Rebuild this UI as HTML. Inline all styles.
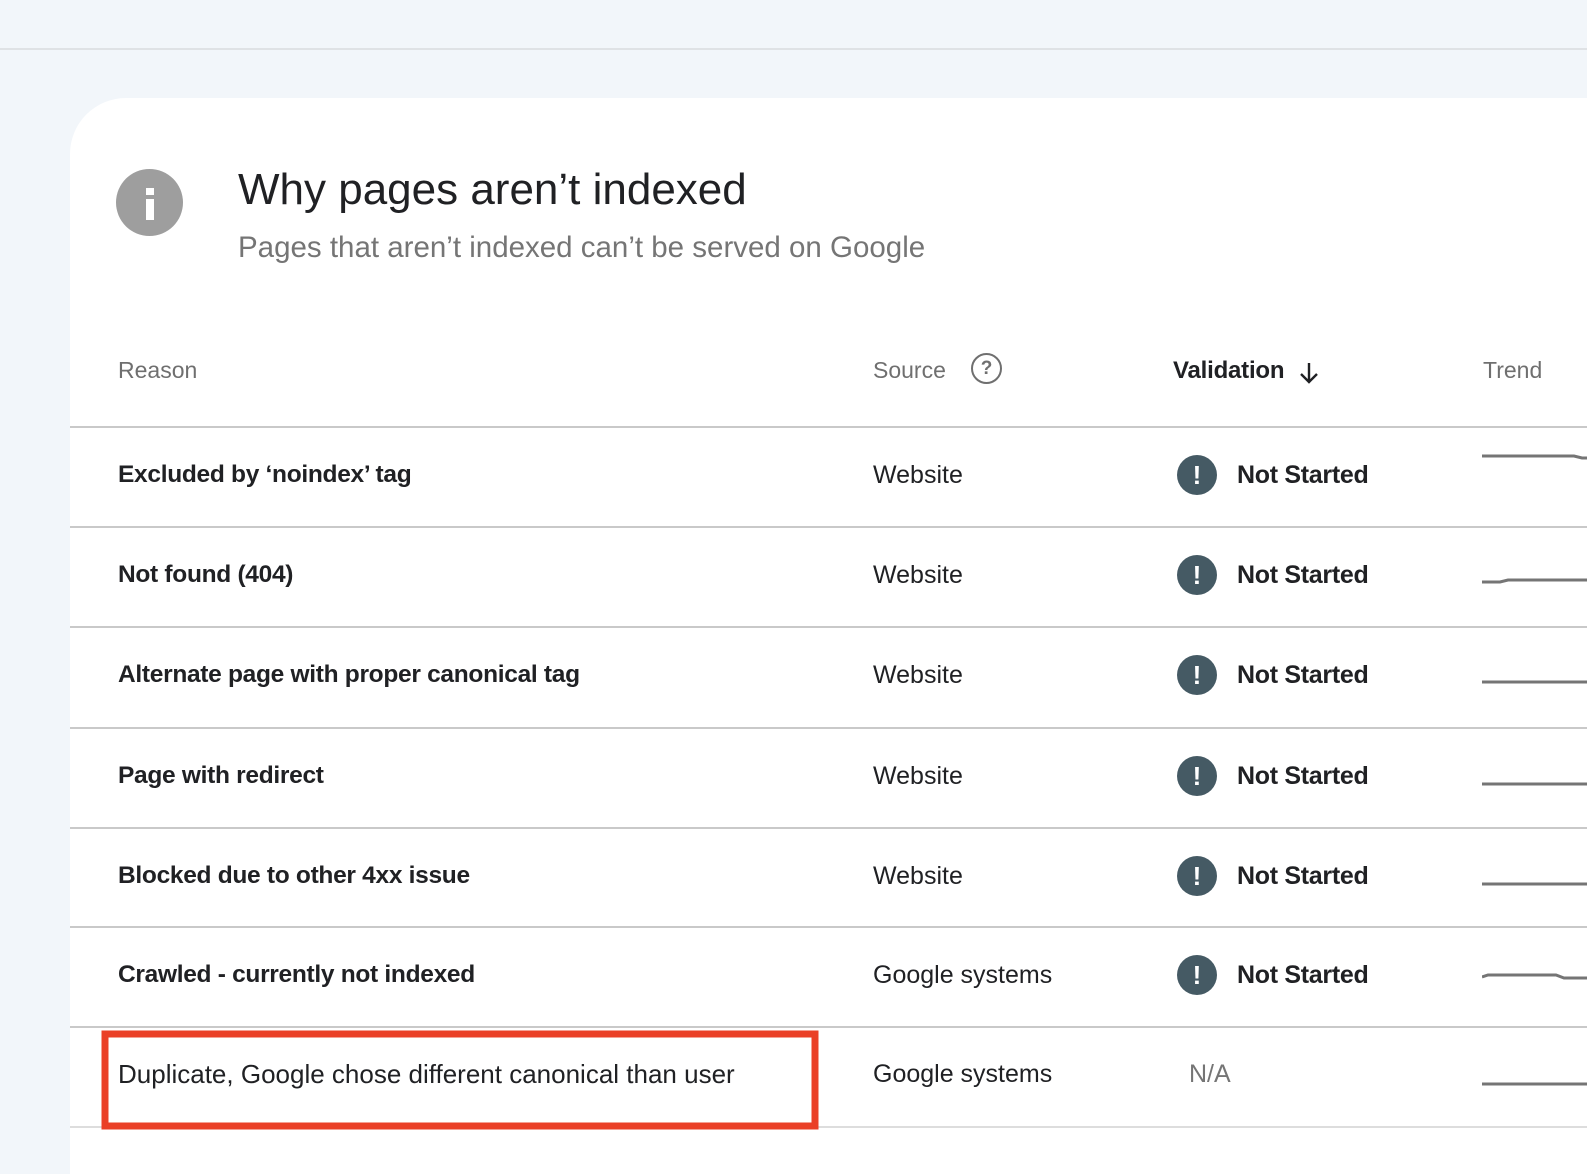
<!DOCTYPE html>
<html><head><style>
html,body{margin:0;width:1587px;height:1174px;overflow:hidden}
body{background:#f2f6fa;font-family:"Liberation Sans",sans-serif;position:relative;color:#202124}
.topline{position:absolute;left:0;right:0;top:48px;height:2px;background:#dfe2e5}
.card{position:absolute;left:70px;top:98px;width:1600px;height:1076px;background:#fff;border-top-left-radius:56px}
.abs{position:absolute;white-space:nowrap}
.line{position:absolute;left:70px;width:1600px;height:2px;background:#c9c9c9}
.row{position:absolute;left:0;width:1587px;height:98px}
.row>div{position:absolute;top:0;height:98px;display:flex;align-items:center;white-space:nowrap}
.r{left:118px;font-size:24.5px;font-weight:bold;letter-spacing:-0.3px}
.s{left:873px;font-size:25px}
.ex{left:1177px;}
.ex span{width:40px;height:40px;border-radius:50%;background:#455a64;color:#fff;font-weight:bold;font-size:26px;text-align:center;line-height:40px;display:block}
.ns{left:1237px;font-size:25px;font-weight:bold;letter-spacing:-0.3px}
</style></head><body>
<div class="topline"></div>
<div class="card"></div>
<div class="abs" style="left:116px;top:169px;width:67px;height:67px;border-radius:50%;background:#9e9e9e"></div>
<div class="abs" style="left:146px;top:188px;width:8px;height:7px;background:#fff"></div>
<div class="abs" style="left:146px;top:199px;width:8px;height:21px;background:#fff"></div>
<div class="abs" style="left:238px;top:165px;font-size:44px;color:#202124">Why pages aren’t indexed</div>
<div class="abs" style="left:238px;top:231px;font-size:29.5px;color:#757575">Pages that aren’t indexed can’t be served on Google</div>
<div class="abs" style="left:118px;top:357px;font-size:23px;color:#6f6f6f">Reason</div>
<div class="abs" style="left:873px;top:357px;font-size:23px;color:#6f6f6f">Source</div>
<div class="abs" style="left:971px;top:353px;width:27px;height:27px;border:2.5px solid #6f6f6f;border-radius:50%;text-align:center;line-height:27px;font-size:19px;font-weight:bold;color:#6f6f6f">?</div>
<div class="abs" style="left:1173px;top:357px;font-size:24px;color:#202124;font-weight:bold;letter-spacing:-0.2px">Validation</div>
<svg class="abs" style="left:1296px;top:360px" width="26" height="26"><path d="M13 3v19M5 14l8 8 8-8" stroke="#202124" stroke-width="2.4" fill="none"/></svg>
<div class="abs" style="left:1483px;top:357px;font-size:23px;color:#6f6f6f">Trend</div>
<div class="line" style="top:426px"></div>
<div class="line" style="top:526px"></div>
<div class="line" style="top:626px"></div>
<div class="line" style="top:727px"></div>
<div class="line" style="top:827px"></div>
<div class="line" style="top:926px"></div>
<div class="line" style="top:1026px"></div>
<div class="line" style="top:1126px;background:#ddd"></div>

<div class="row" style="top:426px"><div class="r">Excluded by ‘noindex’ tag</div><div class="s">Website</div><div class="ex"><span>!</span></div><div class="ns">Not Started</div></div>
<div class="row" style="top:526px"><div class="r">Not found (404)</div><div class="s">Website</div><div class="ex"><span>!</span></div><div class="ns">Not Started</div></div>
<div class="row" style="top:626px"><div class="r">Alternate page with proper canonical tag</div><div class="s">Website</div><div class="ex"><span>!</span></div><div class="ns">Not Started</div></div>
<div class="row" style="top:727px"><div class="r">Page with redirect</div><div class="s">Website</div><div class="ex"><span>!</span></div><div class="ns">Not Started</div></div>
<div class="row" style="top:827px"><div class="r">Blocked due to other 4xx issue</div><div class="s">Website</div><div class="ex"><span>!</span></div><div class="ns">Not Started</div></div>
<div class="row" style="top:926px"><div class="r">Crawled - currently not indexed</div><div class="s">Google systems</div><div class="ex"><span>!</span></div><div class="ns">Not Started</div></div>
<div class="row" style="top:1025px"><div class="r" style="font-weight:normal;letter-spacing:0;font-size:26px">Duplicate, Google chose different canonical than user</div><div class="s">Google systems</div><div class="s" style="left:1189px;color:#757575">N/A</div></div>

<svg class="abs" style="left:1482px;top:445px" width="110" height="650">
<g stroke="#757575" stroke-width="3" fill="none">
<path d="M0 11H92L100 13H110"/>
<path d="M0 137H18L26 135H110"/>
<path d="M0 237H110"/>
<path d="M0 339H110"/>
<path d="M0 439H110"/>
<path d="M0 532L6 530H74L82 533H110"/>
<path d="M0 639H110"/>
</g></svg>

<svg class="abs" style="left:99px;top:1028px" width="722" height="104">
<rect x="6" y="6" width="710" height="92" fill="none" stroke="#ea4027" stroke-width="7"/>
</svg>
</body></html>
